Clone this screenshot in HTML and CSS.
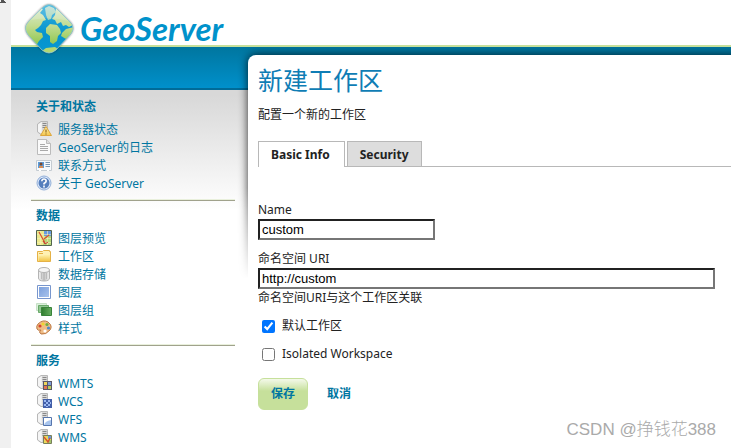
FILE: index.html
```html
<!DOCTYPE html>
<html lang="zh-CN">
<head>
<meta charset="utf-8">
<title>GeoServer: 新建工作区</title>
<link rel="stylesheet" href="styles.css">
</head>
<body>
<svg class="defs" aria-hidden="true">
  <defs>
    <linearGradient id="metal"><stop offset="0" stop-color="#f4f4f4"/><stop offset=".5" stop-color="#c4c4c4"/><stop offset="1" stop-color="#eee"/></linearGradient>
    <linearGradient id="gold" x2="0" y2="1"><stop offset="0" stop-color="#fff3b0"/><stop offset="1" stop-color="#f3c64b"/></linearGradient>
    <linearGradient id="blue" x2="1" y2="1"><stop offset="0" stop-color="#7b9fdc"/><stop offset="1" stop-color="#a9c3ec"/></linearGradient>
    <linearGradient id="green"><stop offset="0" stop-color="#2f7d2f"/><stop offset="1" stop-color="#67ad60"/></linearGradient>
    <symbol id="server" viewBox="0 0 16 16">
      <path d="M1.500 3 5 .5h6.500v13H5L1.500 11z" fill="#d9d9d9" stroke="#b8b8b8"/>
      <path d="M2 3.500 5 1.500v11L2 10.500z" fill="#f5f5f5"/>
      <path d="M5.500 1v12" stroke="#eee"/>
      <path d="M6.500 2.500h4M6.500 4.500h4M6.500 6.500h4" stroke="#888"/>
    </symbol>
  </defs>
</svg>
<div class="page">
  <svg class="corner" viewBox="0 0 6 3" aria-hidden="true"><path d="M1 0h3v1h1v1h1v1H0V2h1z" fill="#555"/></svg>
  <header class="header">
    <a class="brand" href="#">
      <svg class="logo" viewBox="0 0 54 54" aria-hidden="true">
        <defs>
          <linearGradient id="sea" x2="0" y2="1"><stop offset="0" stop-color="#39b3df"/><stop offset=".6" stop-color="#0593ce"/><stop offset="1" stop-color="#0798d2"/></linearGradient>
          <linearGradient id="land" gradientUnits="userSpaceOnUse" x1="0" y1="6" x2="0" y2="44"><stop offset="0" stop-color="#d9ead0"/><stop offset=".45" stop-color="#c3dd93"/><stop offset="1" stop-color="#8cc54c"/></linearGradient>
          <clipPath id="globe"><path d="M19 6Q26 -1 33 6L46 19Q54 26 46 34L33 48Q26 54 19 48L6 34Q-1 26 6 19Z"/></clipPath>
          <filter id="soft" x="-20%" y="-20%" width="140%" height="140%"><feGaussianBlur stdDeviation="1.200"/></filter>
        </defs>
        <path d="M19 6Q26 -1 33 6L46 19Q54 26 46 34L33 48Q26 54 19 48L6 34Q-1 26 6 19Z" fill="#222" opacity=".75" filter="url(#soft)"/>
        <g clip-path="url(#globe)">
          <path d="M0 0h54v54H0z" fill="url(#sea)"/>
          <path d="M2 21 17 6l3 1-3 4 3 2 3 5-3 1-2 4-3 3-3 2 2 2 5 1 1 4-4 4-3 5-3-3-2-5-5-4-4-4z" fill="url(#land)"/>
          <path d="m22 6 4-2 5 2 2 4-4 3-1 4-3 1-2-5z" fill="url(#land)" opacity=".8"/>
          <path d="m33 6 17 17-4 2-3-2-3 1-2-4-4 2-2-4-3-1 3-4z" fill="url(#land)"/>
          <path d="m23 26 4-4 7 1 3 4 1 4-3 3-1 5-4 3-3-2v-6l-4-3z" fill="url(#land)"/>
          <path d="m39 31 4-4 8-2-2 7-6 5-5-3z" fill="url(#land)"/>
          <path d="m19 49 4-3 9-1 3 2-6 6z" fill="#b5d872"/>
          <path d="M19 6Q26 -1 33 6L46 19Q28 14 8 18Z" fill="#fff" opacity=".16"/>
        </g>
        <path d="M19 6Q26 -1 33 6L46 19Q54 26 46 34L33 48Q26 54 19 48L6 34Q-1 26 6 19Z" fill="none" stroke="#9bd0d4" opacity=".75"/>
      </svg>
      <span>GeoServer</span>
    </a>
  </header>
  <div class="columns">
    <nav class="sidebar">
      <section class="group">
        <h2>关于和状态</h2>
        <ul>
          <li><a href="#"><svg viewBox="0 0 16 16"><use href="#server"/><path d="M10 5.500 15.500 14.500h-11z" fill="url(#gold)" stroke="#dda63b"/><path d="M10 8.500v3M10 12.500v1" stroke="#765018"/></svg>服务器状态</a></li>
          <li><a href="#"><svg viewBox="0 0 16 16"><path d="M1.500.5h9l4 4v11h-13z" fill="#fafafa" stroke="#bbb"/><path d="M10.500.5v4h4" fill="#ddd" stroke="#bbb"/><path d="M4 5.500h5M4 7.500h8M4 9.500h8M4 11.500h8" stroke="#aaa"/></svg>GeoServer的日志</a></li>
          <li><a href="#"><svg viewBox="0 0 16 16"><path d="M.5 3.500h15v10h-15z" fill="#f7fafc" stroke="#c5ccd2"/><path d="M2 5h6v6H2z" fill="#5c9ad7"/><circle cx="5" cy="7" r="1.500" fill="#7b492c"/><path d="M3 11V9h4v2z" fill="#dc8f55"/><path d="M9.500 5.500H14M9.500 7.500H14M9.500 9.500H14" stroke="#7998b5"/><path d="M3 13.500h2m6 0h2" stroke="#fff"/></svg>联系方式</a></li>
          <li><a href="#"><svg viewBox="0 0 16 16"><circle cx="8" cy="8" r="7" fill="#dfeafb" stroke="#92afd8"/><circle cx="8" cy="8" r="5.500" fill="#557fbd"/><path d="M5.800 6.200Q6 4 8 4t2.200 2Q10.200 7.300 8 8.500v1M8 10.500v2" fill="none" stroke="#fff" stroke-width="1.600"/></svg>关于 GeoServer</a></li>
        </ul>
      </section>
      <section class="group">
        <h2>数据</h2>
        <ul>
          <li><a href="#"><svg viewBox="0 0 16 16"><path d="M.5.5h15v15H.5z" fill="#ece98c" stroke="#51634f"/><path d="M8 1h7v5H8z" fill="#6799df"/><path d="M9 6h6v9H7z" fill="#b7d77c"/><path d="M1 4.500h14M1 8.500h14M1 12.500h14M4.500 1v14M11.500 1v14" stroke="#f5f1b8" stroke-width=".6"/><path d="m3 2 6 11M8 9l5-4" fill="none" stroke="#d75131" stroke-width="1.300"/><path d="m7 11 2 3 3-2" fill="none" stroke="#c43a2a"/></svg>图层预览</a></li>
          <li><a href="#"><svg viewBox="0 0 16 16"><path d="M1.500 3.500h5l1-1h6v1h1v10h-13z" fill="#fff1b4" stroke="#e5b146"/><path d="M2.500 7.500h5l1-1h5.500v6.500h-11.500z" fill="url(#gold)"/><path d="M3 5.500h4" stroke="#e5b146"/></svg>工作区</a></li>
          <li><a href="#"><svg viewBox="0 0 16 16"><path d="M2.500 4v8q0 3 5.500 3t5.500-3V4" fill="url(#metal)" stroke="#b4b4b4"/><ellipse cx="8" cy="4" rx="5.500" ry="2.500" fill="#f5f5f5" stroke="#b4b4b4"/><path d="M5.500 7v6M8 7v7M10.500 7v6" stroke="#aaa" opacity=".6"/></svg>数据存储</a></li>
          <li><a href="#"><svg viewBox="0 0 16 16"><path d="M1.500 1.500h13v13h-13z" fill="#fff" stroke="#7896cd"/><path d="M3 3h10v10H3z" fill="url(#blue)"/></svg>图层</a></li>
          <li><a href="#"><svg viewBox="0 0 16 16"><path d="M.5 1.500h10v7H.5z" fill="#dcefdc" stroke="#c6e1c6"/><path d="M2.500 3.500h10v7h-10z" fill="#92c692" stroke="#69a969"/><path d="M5.500 5.500h10v8h-10z" fill="url(#green)" stroke="#39833a"/></svg>图层组</a></li>
          <li><a href="#"><svg viewBox="0 0 16 16"><path d="M2 4Q7-1 12 2q5 4 2 8-4 5-9 4-3-2 0-4-3 1-4-1-1-3 1-5z" fill="#efbd87" stroke="#bd7843"/><circle cx="4" cy="6" r="1.600" fill="#d74428"/><circle cx="7" cy="4" r="1.600" fill="#efd62d"/><circle cx="11" cy="4.500" r="1.600" fill="#6fae40"/><circle cx="12.500" cy="8" r="1.600" fill="#4c87cc"/><circle cx="9" cy="11" r="1.600" fill="#fff"/></svg>样式</a></li>
        </ul>
      </section>
      <section class="group">
        <h2>服务</h2>
        <ul>
          <li><a href="#"><svg viewBox="0 0 16 16"><use href="#server"/><path d="M7 6h9v9H7z" fill="#5b5968"/><path d="M8 7h3v3H8z" fill="#efd65c"/><path d="M12 7h3v3h-3z" fill="#7e9edb"/><path d="M8 11h3v3H8z" fill="#e37550"/><path d="M12 11h3v3h-3z" fill="#b8cc5c"/></svg>WMTS</a></li>
          <li><a href="#"><svg viewBox="0 0 16 16"><use href="#server"/><path d="M7 6h9v9H7z" fill="#435fa9"/><path d="M8 7h2v2H8zm4 0h2v2h-2zm-2 2h2v2h-2zm4 0h1v2h-1zm-6 2h2v2H8zm4 0h2v2h-2zm-2 2h2v1h-2z" fill="#9cb9f2"/></svg>WCS</a></li>
          <li><a href="#"><svg viewBox="0 0 16 16"><use href="#server"/><path d="M7.500 6.500h8v8h-8z" fill="#fff" stroke="#5676ae"/><path d="M8 14q1-4 7-5v5z" fill="#a9c5ed"/></svg>WFS</a></li>
          <li><a href="#"><svg viewBox="0 0 16 16"><use href="#server"/><path d="M7.500 6.500h8v8h-8z" fill="#ead759" stroke="#77805b"/><path d="M12 7h3v3h-3z" fill="#6d97d5"/><path d="M11 11h4v3h-4z" fill="#a5c56d"/><path d="m8 8 4 5 2-4" fill="none" stroke="#d94d2f" stroke-width="1.300"/></svg>WMS</a></li>
        </ul>
      </section>
    </nav>
    <main class="main">
      <div class="shade"></div>
      <h1>新建工作区</h1>
      <p class="intro">配置一个新的工作区</p>
      <div class="tabs">
        <a class="tab active" href="#">Basic Info</a>
        <a class="tab" href="#">Security</a>
      </div>
      <form class="form">
        <div class="field">
          <label for="name">Name</label>
          <input class="text short" id="name" type="text" value="custom">
        </div>
        <div class="field">
          <label for="uri">命名空间 URI</label>
          <input class="text" id="uri" type="text" value="http://custom">
          <span>命名空间URI与这个工作区关联</span>
        </div>
        <div class="check"><input id="default" type="checkbox" checked><label for="default">默认工作区</label></div>
        <div class="check"><input id="isolated" type="checkbox"><label for="isolated">Isolated Workspace</label></div>
        <div class="actions">
          <button class="save" type="button">保存</button>
          <a class="cancel" href="#">取消</a>
        </div>
      </form>
    </main>
  </div>
  <div class="watermark">CSDN @挣钱花388</div>
</div>
</body>
</html>
```
FILE: styles.css
```css
* { box-sizing: border-box; }

body {
  margin: 0;
  color: #222;
  background: #fff;
  font: 12px/18px "Noto Sans", "Noto Sans CJK SC", sans-serif;
}

a { color: #0076a1; text-decoration: none; }
h1, h2, p, ul { margin: 0; padding: 0; }
ul { list-style: none; }

.defs { position: absolute; width: 0; height: 0; }

.page {
  position: relative;
  display: flex;
  flex-direction: column;
  min-height: 100vh;
  border-left: 11px solid #f0f0f0;
}

.corner { position: absolute; top: 0; left: -11px; width: 6px; height: 3px; }

.header {
  position: relative;
  z-index: 2;
  height: 47px;
  border-bottom: 2px solid #c6e09b;
}

.brand {
  display: flex;
  align-items: flex-start;
  gap: 3px;
  padding: 2px 0 0 12px;
  color: #0092cb;
  font: italic bold 33px/52px Lato, sans-serif;
}

.logo { width: 54px; height: 54px; }

.columns {
  position: relative;
  z-index: 1;
  display: grid;
  grid-template-columns: 237px minmax(0, 1fr);
  flex: 1;
  background:
    linear-gradient(#00769f, #0090cb 41px, #006b98 41px, #006b98 43px, transparent 43px),
    linear-gradient(#d8d8d8 43px, #d8d8d8 48px, #fff 163px);
}

.sidebar { padding: 51px 13px 0 20px; }

.group { padding-bottom: 6px; }
.group:last-child { padding-bottom: 0; }
.group + .group {
  padding-top: 7px;
  border-top: 1px solid #e9f0dc;
  box-shadow: inset 0 1px #a0a28c;
}

.group h2 {
  margin-bottom: 5px;
  padding-left: 5px;
  color: #0076a1;
  font-size: 12px;
  line-height: 18px;
}

.group a {
  display: flex;
  align-items: center;
  gap: 6px;
  height: 18px;
  padding-left: 5px;
}

.group svg { width: 16px; height: 16px; margin-bottom: 2px; }

.main {
  position: relative;
  margin-top: 8px;
  padding: 9px 0 0 10px;
  background: #fff;
  border-top-left-radius: 8px;
}

.shade {
  position: absolute;
  z-index: -1;
  top: -8px;
  right: 0;
  left: -12px;
  height: 232px;
  overflow: hidden;
  mask-image: linear-gradient(#000 140px, transparent);
}

.shade::before {
  content: "";
  position: absolute;
  inset: 8px -20px -20px 12px;
  border-radius: 8px;
  box-shadow: 0 0 10px #000c;
}

h1 {
  color: #0f7db5;
  font-size: 25px;
  font-weight: 400;
  line-height: 32px;
}

.intro { margin-top: 10px; }

.tabs {
  display: flex;
  gap: 2px;
  margin-top: 17px;
  border-bottom: 1px solid #b8b8b8;
}

.tab {
  height: 25px;
  padding: 0 12px;
  border: 1px solid #b8b8b8;
  border-bottom: 0;
  background: #ddd;
  color: #222;
  font-weight: 700;
  line-height: 26px;
}

.tab.active { height: 26px; padding-right: 14px; margin-bottom: -1px; background: #fff; }

.form { padding: 34px 16px 0 0; }

.field { display: flex; flex-direction: column; margin-bottom: 10px; }

.text {
  width: 100%;
  height: 21px;
  padding: 1px 2px;
  border: 2px inset #767676;
  color: #000;
  font: 13px "Liberation Sans", sans-serif;
}

.short { width: 177px; }

.check {
  display: flex;
  align-items: center;
  gap: 7px;
  margin-bottom: 10px;
  padding-left: 4px;
}

.check input { width: 13px; height: 13px; margin: 0; accent-color: #0075ff; }

.actions { display: flex; align-items: center; gap: 19px; margin-top: 15px; }

.save {
  height: 32px;
  padding: 0 12px;
  border: 1px solid #c6e09b;
  border-radius: 6px;
  background: linear-gradient(#f4f9ea, #c6e09b 12px);
  color: #0076a1;
  font: inherit;
  font-weight: 700;
}

.cancel { font-weight: 700; }

.watermark {
  position: absolute;
  z-index: 3;
  right: 15px;
  bottom: 6px;
  color: #aaa;
  font: 300 17px/24px "Liberation Sans", "Noto Sans CJK SC", sans-serif;
}
```
